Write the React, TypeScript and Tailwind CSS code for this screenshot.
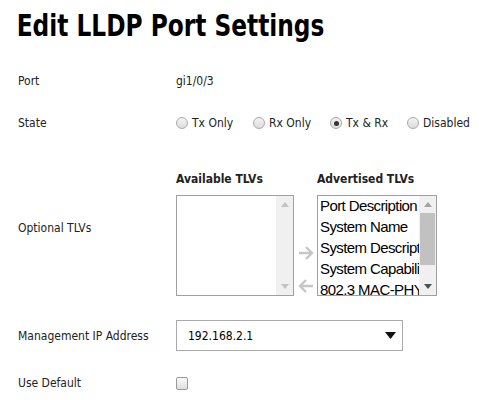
import React from 'react'

const body = { fontFamily: '"DejaVu Sans Condensed", "DejaVu Sans", sans-serif' }
const listFont = { fontFamily: '"Liberation Sans", Arial, sans-serif' }

const Radio = ({ label, checked }: { label: string; checked?: boolean }) => (
  <label className="flex w-[77px] shrink-0 items-center gap-[4px] last:w-auto">
    <span className="flex h-[12px] w-[12px] shrink-0 items-center justify-center rounded-full border border-[#a9a9a9] bg-gradient-to-b from-[#f4f4f4] to-[#dcdcdc]">
      {checked && <span className="h-[5px] w-[5px] rounded-full bg-[#333]" />}
    </span>
    <span>{label}</span>
  </label>
)

const ScrollBar = ({ thumb }: { thumb?: boolean }) => (
  <div className="flex w-[17px] flex-col items-center bg-[#f0f0f0]">
    <div className="flex h-[17px] items-center justify-center">
      <svg width="8" height="5" viewBox="0 0 8 5">
        <path d="M0 5 L4 0 L8 5 Z" fill={thumb ? '#a3a3a3' : '#c2c2c2'} />
      </svg>
    </div>
    <div className="w-full flex-1 px-[1px]">
      {thumb && <div className="h-[52px] w-full bg-[#c1c1c1]" />}
    </div>
    <div className="flex h-[17px] items-center justify-center">
      <svg width="8" height="5" viewBox="0 0 8 5">
        <path d="M0 0 L8 0 L4 5 Z" fill={thumb ? '#505050' : '#c2c2c2'} />
      </svg>
    </div>
  </div>
)

export default function App() {
  const advertised = ['Port Description', 'System Name', 'System Description', 'System Capabilities', '802.3 MAC-PHY']
  return (
    <div className="h-[400px] w-[479px] overflow-hidden bg-white text-[12px] text-[#222]" style={body}>
      <h1 className="origin-left scale-x-[0.835] whitespace-nowrap pl-[20px] pt-[5px] text-[31px] font-bold leading-[40px] text-black">
        Edit LLDP Port Settings
      </h1>

      <div className="pl-[18px]">
        <div className="mt-[28px] flex h-[16px] items-center">
          <span className="w-[158px] shrink-0">Port</span>
          <span>gi1/0/3</span>
        </div>

        <div className="mt-[26px] flex h-[16px] items-center">
          <span className="w-[158px] shrink-0">State</span>
          <div className="flex">
            <Radio label="Tx Only" />
            <Radio label="Rx Only" />
            <Radio label="Tx & Rx" checked />
            <Radio label="Disabled" />
          </div>
        </div>

        <div className="mt-[40px] flex">
          <span className="w-[158px] shrink-0 pt-[48px]">Optional TLVs</span>
          <div className="flex">
            <div className="flex flex-col">
              <span className="h-[16px] font-bold leading-[16px]">Available TLVs</span>
              <div className="mt-[8px] flex h-[101px] w-[118px] border border-[#a0a0a0]">
                <div className="flex-1" />
                <ScrollBar />
              </div>
            </div>
            <div className="flex w-[23px] flex-col items-center justify-end pb-[3px]">
              <svg width="16" height="14" viewBox="0 0 16 14" className="mb-[19px]">
                <path d="M1 7 H14 M8 1 L14 7 L8 13" stroke="#c6c6c6" strokeWidth="2.4" fill="none" />
              </svg>
              <svg width="16" height="14" viewBox="0 0 16 14">
                <path d="M15 7 H2 M8 1 L2 7 L8 13" stroke="#c6c6c6" strokeWidth="2.4" fill="none" />
              </svg>
            </div>
            <div className="flex flex-col">
              <span className="h-[16px] font-bold leading-[16px]">Advertised TLVs</span>
              <div className="mt-[8px] flex h-[101px] w-[120px] border border-[#a0a0a0]">
                <div
                  className="-mt-[1px] flex-1 overflow-hidden pl-[2px] text-[15px] leading-[21px] tracking-[-0.6px] text-black"
                  style={listFont}
                >
                  {advertised.map((a) => (
                    <div key={a} className="whitespace-nowrap">{a}</div>
                  ))}
                </div>
                <ScrollBar thumb />
              </div>
            </div>
          </div>
        </div>

        <div className="mt-[24px] flex items-center">
          <span className="w-[158px] shrink-0">Management IP Address</span>
          <div className="flex h-[31px] w-[227px] items-center justify-between border border-[#a9a9a9] pl-[11px] pr-[6px] text-[12px] text-black">
            <span>192.168.2.1</span>
            <svg width="11" height="7" viewBox="0 0 11 7">
              <path d="M0 0 H11 L5.5 7 Z" fill="#111" />
            </svg>
          </div>
        </div>

        <div className="mt-[24px] flex h-[16px] items-center">
          <span className="w-[158px] shrink-0">Use Default</span>
          <span className="h-[13px] w-[12px] rounded-[2px] border border-[#9a9a9a] bg-gradient-to-b from-[#fafafa] to-[#dedede]" />
        </div>
      </div>
    </div>
  )
}
